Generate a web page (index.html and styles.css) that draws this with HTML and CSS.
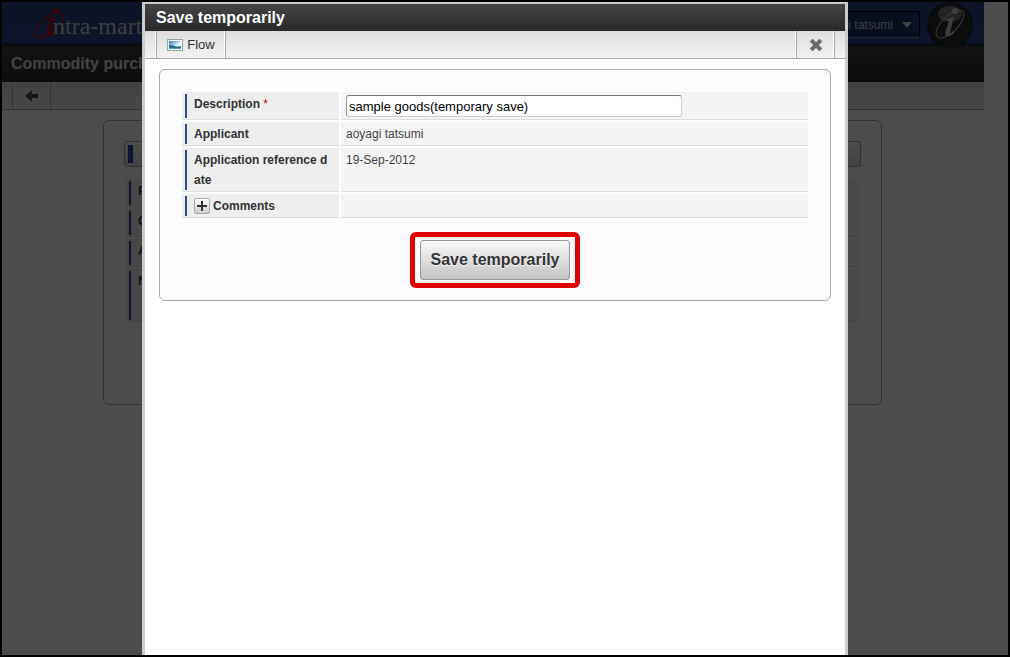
FILE: index.html
```html
<!DOCTYPE html>
<html lang="en">
<head>
    <meta charset="UTF-8">
    <meta name="viewport" content="width=device-width, initial-scale=1.0">
    <title>Commodity purchase</title>
    <link rel="stylesheet" href="styles.css">
</head>
<body>
    <div class="page">
        <header class="global-header">
            <a class="logo" href="#" aria-label="intra-mart">
                <svg class="logo-i" width="32" height="34" viewBox="0 0 32 34">
                    <ellipse cx="16" cy="19" rx="17" ry="8" transform="rotate(-42 16 19)" fill="none" stroke="#b8101c" stroke-width="1.5"/>
                    <circle cx="23" cy="5" r="3" fill="#b8101c"/>
                    <path d="M15 12L22 11L18 27Q18 29 22 25L21 28Q15 33 13 28L17 14L14 14Z" fill="#b8101c"/>
                </svg>
                <span class="logo-text">ntra-mart</span>
            </a>
            <button class="user-menu" type="button">aoyagi tatsumi
                <svg width="10" height="6" viewBox="0 0 10 6"><path d="M0 0h10L5 6z" fill="#ddd"/></svg>
            </button>
            <svg class="im-badge" width="48" height="48" viewBox="0 0 48 48">
                <circle cx="24" cy="23" r="23" fill="#1c2238"/>
                <circle cx="24" cy="23" r="21" fill="#2c2c2c"/>
                <ellipse cx="24" cy="12" rx="12" ry="8" fill="#777"/>
                <ellipse cx="24" cy="22" rx="18" ry="8" transform="rotate(-45 24 22)" fill="none" stroke="#bbb" stroke-width="1"/>
                <circle cx="29" cy="9" r="3" fill="#ccc"/>
                <path d="M21 17L28 15L24 30Q24 33 29 28L28 31Q20 38 19 31L23 19L20 18Z" fill="#ccc"/>
            </svg>
        </header>
        <h1 class="page-title">Commodity purchase</h1>
        <div class="toolbar">
            <button class="tool-back" type="button" aria-label="Back">
                <svg width="13" height="12" viewBox="0 0 13 12"><path d="M0 6l7-6v4h6v4H7v4z" fill="#555"/></svg>
            </button>
        </div>
        <main class="page-panel">
            <h2 class="section-title"></h2>
            <table class="form-table page-table">
                <tr><th scope="row">Purpose</th><td></td></tr>
                <tr><th scope="row">Goods</th><td></td></tr>
                <tr><th scope="row">Amount</th><td></td></tr>
                <tr class="tall"><th scope="row">Notes</th><td></td></tr>
            </table>
        </main>
    </div>
    <div class="overlay">
        <section class="dialog" role="dialog" aria-labelledby="dialog-title">
            <h2 class="dialog-title" id="dialog-title">Save temporarily</h2>
            <div class="dialog-toolbar">
                <button class="tool-flow" type="button">
                    <svg width="16" height="12" viewBox="0 0 16 12">
                        <defs>
                            <linearGradient id="sky" x1="0" y1="0" x2="1" y2="1">
                                <stop offset="0" stop-color="#2c78c8"/>
                                <stop offset="0.6" stop-color="#e4f4fc"/>
                            </linearGradient>
                        </defs>
                        <rect x=".5" y=".5" width="15" height="11" fill="#fff" stroke="#8ba9b5"/>
                        <rect x="2" y="2" width="12" height="8" fill="url(#sky)"/>
                        <path d="M2 6q4 0 6 1t6 0v2H2z" fill="#2c6c80"/>
                        <path d="M2 9h12v1H2z" fill="#5898d0"/>
                    </svg>
                    Flow
                </button>
                <button class="tool-close" type="button" aria-label="Close">
                    <svg width="12" height="12" viewBox="0 0 12 12"><path d="M2.5 2.5l7 7M9.5 2.5l-7 7" stroke="#6c6c6c" stroke-width="4" stroke-linecap="square"/></svg>
                </button>
            </div>
            <form class="dialog-panel">
                <table class="form-table">
                    <tr>
                        <th scope="row"><label for="description">Description</label> <span class="required">*</span></th>
                        <td class="input-cell"><input class="text-input" id="description" type="text" value="sample goods(temporary save)"></td>
                    </tr>
                    <tr><th scope="row">Applicant</th><td>aoyagi tatsumi</td></tr>
                    <tr><th scope="row">Application reference date</th><td>19-Sep-2012</td></tr>
                    <tr>
                        <th scope="row"><span class="comment-label"><button class="expand" type="button" aria-label="Show comments">
                            <svg width="10" height="10" viewBox="0 0 10 10"><path d="M5 0v10M0 5h10" stroke="#333" stroke-width="2"/></svg>
                        </button>Comments</span></th>
                        <td></td>
                    </tr>
                </table>
                <div class="highlight">
                    <button class="save" type="button">Save temporarily</button>
                </div>
            </form>
        </section>
    </div>
</body>
</html>
```
FILE: styles.css
```css
* {
    box-sizing: border-box;
}
html {
    height: 100%;
}
body {
    position: relative;
    height: 100%;
    margin: 0;
    border: 2px solid #000;
    overflow: hidden;
    background: #fff;
    color: #333;
    font: 12px/20px "Liberation Sans", Arial, sans-serif;
}
button {
    margin: 0;
    padding: 0;
    border: 0;
    background: none;
    color: inherit;
    font: inherit;
}
h1, h2 {
    margin: 0;
}
svg {
    display: block;
    flex: none;
}

/* page behind the dialog */
.page {
    margin-right: 24px;
}
.global-header {
    display: flex;
    align-items: flex-start;
    height: 44px;
    padding: 0 10px 0 31px;
    border-bottom: 3px solid #1c2840;
    background: linear-gradient(#2c4480, #284890);
}
.logo {
    display: flex;
    margin-top: 4px;
    margin-right: auto;
    color: #ccc;
    text-decoration: none;
}
.logo-text {
    margin-left: -12px;
    font: 24px/40px "Liberation Serif", "Times New Roman", serif;
}
.user-menu {
    display: flex;
    align-items: center;
    gap: 9px;
    height: 27px;
    margin-top: 9px;
    padding: 0 7px;
    border: 1px solid #000;
    border-bottom-color: #888;
    background: #1c3468;
    color: #ccc;
}
.im-badge {
    position: relative;
    margin-left: 6px;
}
.page-title {
    height: 36px;
    padding-left: 9px;
    background: linear-gradient(#404040, #2c2c2c);
    color: #ddd;
    font-size: 16px;
    line-height: 36px;
}
.toolbar {
    display: flex;
    height: 28px;
    padding-left: 10px;
    border-bottom: 1px solid #aaa;
    background: linear-gradient(#ddd, #f0f0f0);
}
.tool-back {
    display: flex;
    align-items: center;
    justify-content: center;
    width: 39px;
    border: 1px solid #aaa;
    border-width: 0 1px;
}
.page-panel {
    height: 285px;
    margin: 10px 102px 0 101px;
    padding: 20px;
    border: 1px solid #aaa;
    border-radius: 6px;
}
.section-title {
    height: 26px;
    margin-bottom: 10px;
    border: 1px solid #aaa;
    border-radius: 3px;
    background: linear-gradient(#fff, #ddd);
}
.section-title::before {
    content: "";
    display: block;
    width: 5px;
    height: 18px;
    margin: 3px;
    background: #2c4c94;
}

/* label / value rows */
.form-table {
    width: 100%;
    border-spacing: 2px;
    table-layout: fixed;
}
.form-table th,
.form-table td {
    padding: 2px 5px 1px;
    border-bottom: 1px solid #ddd;
    background: #f4f4f4;
    text-align: left;
    vertical-align: top;
}
.form-table td {
    color: #444;
}
.form-table th {
    width: 157px;
    padding: 2px 10px 1px 12px;
    background: linear-gradient(#2c4c94, #2c4c94) 3px 2px / 2px calc(100% - 3px) no-repeat #eee;
    word-break: break-all;
}
.form-table .input-cell {
    padding: 3px 5px 2px;
}
.page-table th,
.page-table td {
    height: 28px;
}
.page-table .tall th {
    height: 53px;
}

/* dialog */
.overlay {
    position: absolute;
    inset: 0;
    display: flex;
    justify-content: center;
    padding-right: 20px;
    background: rgba(0, 0, 0, 0.7);
}
.dialog {
    width: 706px;
    border: solid #ccc;
    border-width: 2px 3px 0;
    background: #fff;
}
.dialog-title {
    height: 27px;
    padding-left: 11px;
    background: linear-gradient(#444, #2a2a2a);
    color: #fff;
    font-size: 16px;
    line-height: 27px;
}
.dialog-toolbar {
    display: flex;
    height: 28px;
    padding: 0 10px 0 11px;
    border-bottom: 1px solid #aaa;
    background: linear-gradient(#ddd, #f2f2f2);
}
.tool-flow,
.tool-close {
    display: flex;
    align-items: center;
    justify-content: center;
    border: 1px solid #aaa;
    border-width: 0 1px;
    box-shadow: -1px 0 #fff, inset -1px 0 #fff;
}
.tool-flow {
    gap: 4px;
    width: 70px;
    font-size: 13px;
}
.tool-close {
    width: 39px;
    margin-left: auto;
}
.dialog-panel {
    margin: 10px 14px;
    padding: 20px 20px 12px;
    border: 1px solid #aaa;
    border-radius: 6px;
    background: #fcfcff;
}
.required {
    color: #d00;
    font-weight: normal;
}
.text-input {
    display: block;
    width: 336px;
    height: 22px;
    padding: 0 2px;
    border: 1px solid #ccc;
    border-top-color: #777;
    border-left-color: #999;
    border-radius: 3px;
    background: #fff;
    color: #000;
    font: inherit;
    font-size: 13px;
}
.comment-label {
    display: flex;
    align-items: center;
    gap: 3px;
}
.expand {
    display: flex;
    align-items: center;
    justify-content: center;
    width: 16px;
    height: 16px;
    border: 1px solid #aaa;
    border-radius: 2px;
    background: linear-gradient(#fff, #ccc);
}
.highlight {
    width: fit-content;
    margin: 12px auto 0;
    padding: 3px 5px;
    border: 5px solid #d00;
    border-radius: 6px;
}
.save {
    display: block;
    width: 150px;
    height: 40px;
    border: 1px solid #999;
    border-radius: 3px;
    background: linear-gradient(#f8f8f8, #c4c4c4);
    font-size: 16px;
    font-weight: bold;
    text-shadow: 0 1px 1px #fff;
}
```
